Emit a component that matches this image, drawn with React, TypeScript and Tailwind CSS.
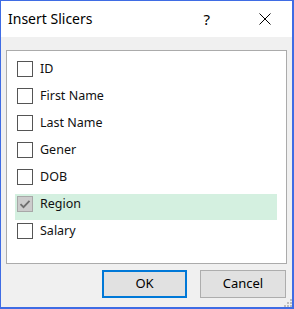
import React from "react";

const fields = ["ID", "First Name", "Last Name", "Gener", "DOB", "Region", "Salary"];

function Box({ checked }: { checked: boolean }) {
  if (checked) {
    return (
      <div className="w-[16px] h-[16px] shrink-0 border border-[#a8a8a8] bg-[#cccccc] flex items-center justify-center">
        <svg width="12" height="12" viewBox="0 0 12 12">
          <path d="M1.5 6.2 L4.5 9.2 L10.5 2.8" fill="none" stroke="#6f6f6f" strokeWidth="1.8" />
        </svg>
      </div>
    );
  }
  return <div className="w-[16px] h-[16px] shrink-0 border border-[#555555] bg-white" />;
}

export default function App() {
  return (
    <div
      className="w-[294px] h-[309px] bg-[#f0f0f0] border-l border-t border-r-2 border-b-2 border-[#3f6ce4] flex flex-col relative text-[#111]"
      style={{ fontFamily: '"Noto Sans", "Open Sans", sans-serif' }}
    >
      <div className="h-[36px] bg-white flex items-center shrink-0">
        <span className="ml-[7px] text-[14px] leading-none text-black">Insert Slicers</span>
        <span className="ml-auto mr-[49px] text-[15px] leading-none text-black">?</span>
        <svg width="12" height="12" viewBox="0 0 12 12" className="mr-[21px]">
          <path d="M0.5 0.5 L11.5 11.5 M11.5 0.5 L0.5 11.5" stroke="#000" strokeWidth="1" />
        </svg>
      </div>
      <div className="mt-[13px] ml-[5px] w-[281px] h-[214px] border border-[#ababab] bg-white pt-[8px] pl-[8px]">
        {fields.map((f) => {
          const sel = f === "Region";
          return (
            <div
              key={f}
              className={`w-[262px] h-[26px] mb-[1px] flex items-start pt-[2px] pl-[2px] ${sel ? "bg-[#d4f0e0]" : ""}`}
            >
              <Box checked={sel} />
              <span className="ml-[7px] h-[16px] flex items-center text-[12.5px] leading-none text-[#111]">{f}</span>
            </div>
          );
        })}
      </div>
      <div className="mt-[6px] flex">
        <button className="ml-[101px] w-[85px] h-[28px] border-2 border-[#0078d7] bg-[#e1e1e1] text-[13px] text-black flex items-center justify-center">
          OK
        </button>
        <button className="ml-[13px] w-[86px] h-[28px] border border-[#adadad] bg-[#e1e1e1] text-[13px] text-black flex items-center justify-center">
          Cancel
        </button>
      </div>
      <svg width="8" height="8" viewBox="0 0 8 8" className="absolute right-[0px] bottom-[0px]">
        <rect x="6" y="0" width="2" height="2" fill="#bdbdbd" />
        <rect x="3" y="3" width="2" height="2" fill="#bdbdbd" />
        <rect x="6" y="3" width="2" height="2" fill="#bdbdbd" />
        <rect x="0" y="6" width="2" height="2" fill="#bdbdbd" />
        <rect x="3" y="6" width="2" height="2" fill="#bdbdbd" />
        <rect x="6" y="6" width="2" height="2" fill="#bdbdbd" />
      </svg>
    </div>
  );
}
